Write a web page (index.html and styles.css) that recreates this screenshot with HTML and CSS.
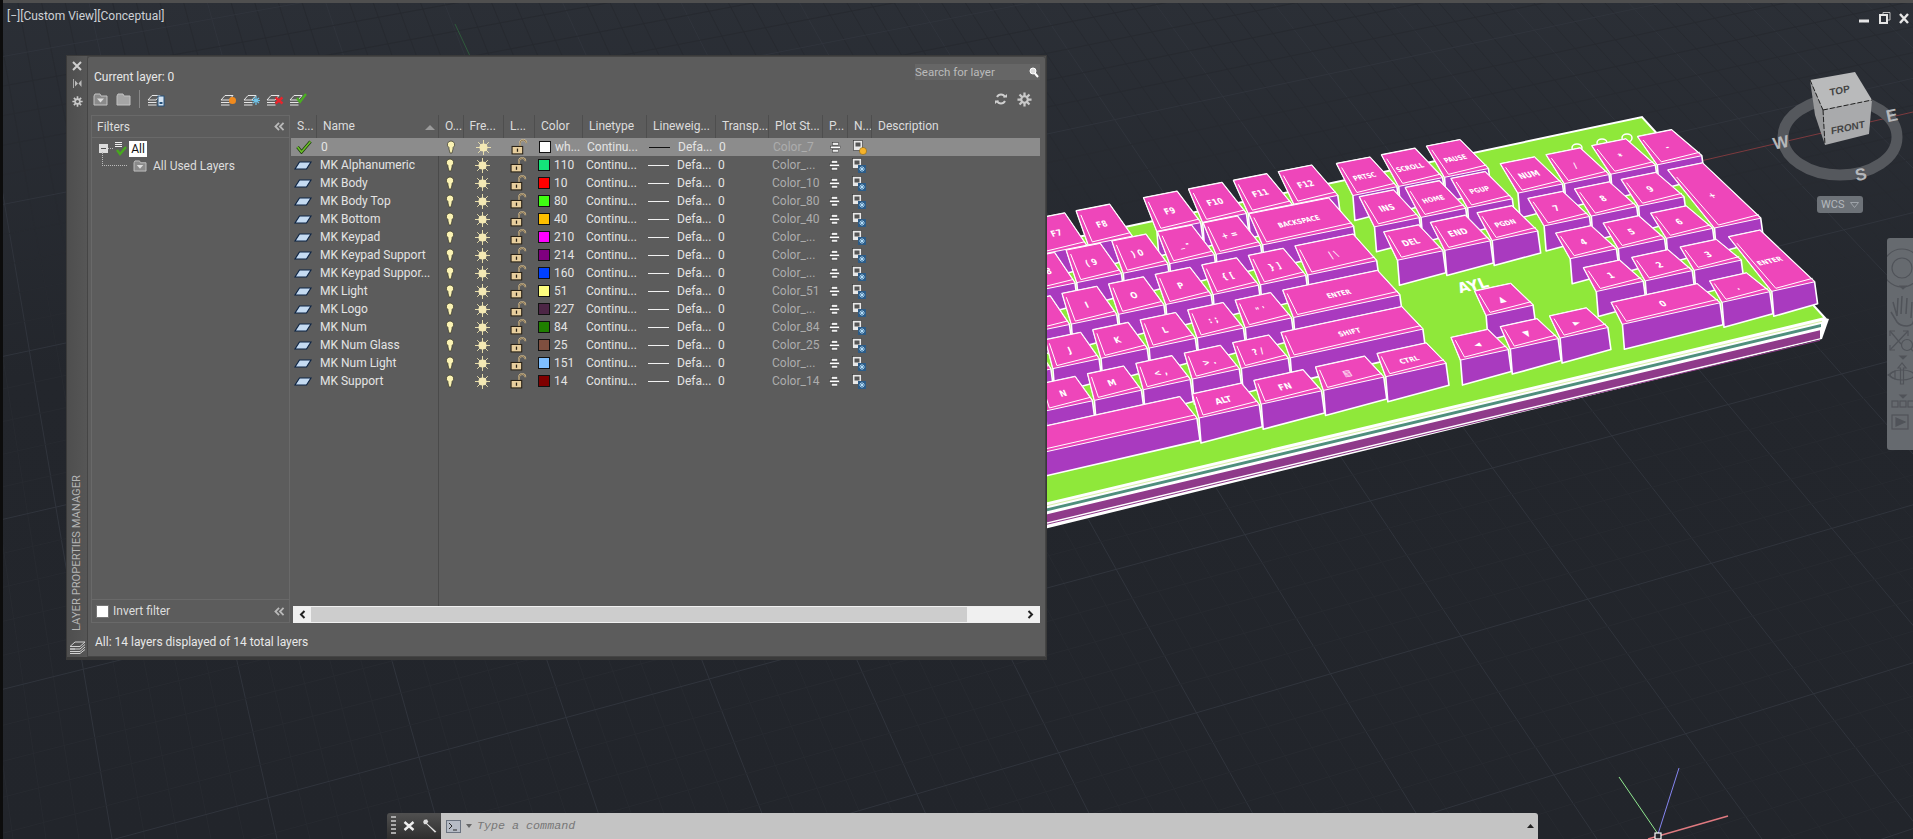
FILE: index.html
```html
<!DOCTYPE html>
<html lang="en">
<head>
<meta charset="utf-8">
<title>Layer Properties Manager</title>
<link rel="stylesheet" href="styles.css">
</head>
<body>
<svg class="defs" width="0" height="0" aria-hidden="true">
  <symbol id="layer" viewBox="0 0 18 9"><path d="M1 8 L5.500 1 H17 L12.500 8Z" fill="#c5dbf2" stroke="#0d2444" stroke-width="1.200"/></symbol>
  <symbol id="check" viewBox="0 0 16 14"><path d="M1.500 7 L5.500 12 L14.500 1.500" fill="none" stroke="#1f3d10" stroke-width="3.200"/><path d="M1.500 7 L5.500 12 L14.500 1.500" fill="none" stroke="#6cc02a" stroke-width="1.600"/></symbol>
  <symbol id="bulb" viewBox="0 0 10 14"><path d="M5 1a3.600 3.600 0 0 1 2 6.600 V9 L6 13 H4 L3 9 V7.600 A3.600 3.600 0 0 1 5 1Z" fill="#fbf3b4" stroke="#3b3a2a" stroke-width=".7"/></symbol>
  <symbol id="sun" viewBox="0 0 16 16"><g stroke="#efe4ae" stroke-width="1"><path d="M8 0v16M0 8h16M2.300 2.300l11.400 11.400M13.700 2.300 2.300 13.700"/></g><circle cx="8" cy="8" r="4.300" fill="#f3e8b4"/></symbol>
  <symbol id="lock" viewBox="0 0 16 15"><path d="M8.500 7 V4 a3 3 0 0 1 6 0" fill="none" stroke="#e9cf9b" stroke-width="1.500"/><path d="M8.500 7 V4 a3 3 0 0 1 6 0" fill="none" stroke="#33281a" stroke-width=".5"/><rect x="1" y="7" width="10" height="7" fill="#e8cf9e" stroke="#2a2216"/><rect x="5.500" y="9" width="1.200" height="3" fill="#2a2216"/></symbol>
  <symbol id="printer" viewBox="0 0 12 12"><rect x="2.500" y=".5" width="7" height="3" fill="#eee" stroke="#333" stroke-width=".6"/><rect x=".5" y="4.500" width="11" height="2.600" fill="#fff" stroke="#333" stroke-width=".6"/><rect x="2.500" y="8" width="7" height="3" fill="#eee" stroke="#333" stroke-width=".6"/></symbol>
  <symbol id="vpf" viewBox="0 0 14 15"><rect x=".5" y=".5" width="9" height="10" fill="#e8e8e8" stroke="#333" stroke-width=".6"/><rect x="2.500" y="2.500" width="5" height="4" fill="#555"/><rect x="6" y="7" width="8" height="8" fill="#2c5c88"/><path d="M10 8v6M7 11h6M8 9l4 4M12 9l-4 4" stroke="#bfe6ff" stroke-width=".8"/></symbol>
  <symbol id="vpn" viewBox="0 0 14 15"><rect x=".5" y=".5" width="9" height="10" fill="#e8e8e8" stroke="#333" stroke-width=".6"/><rect x="2.500" y="2.500" width="5" height="4" fill="#555"/><circle cx="10" cy="11" r="3.600" fill="#f6b32a" stroke="#7a5a10" stroke-width=".5"/></symbol>
  <symbol id="dchev" viewBox="0 0 12 10"><path d="M5.500 1 1.500 5l4 4M10.500 1l-4 4 4 4" fill="none" stroke="#b9b9b9" stroke-width="2"/></symbol>
  <symbol id="folder" viewBox="0 0 15 13"><path d="M1 3V12H14V3H8L7 1H2Z" fill="#8a8a8a" stroke="#c2c2c2"/><path d="M4 5.500h7L7.500 9.500Z" fill="#dcdcdc"/></symbol>
  <symbol id="state" viewBox="0 0 18 15"><path d="M1 8 L5 3.500 H13 L9 8Z" fill="#5c5c5c" stroke="#e6e6e6"/><path d="M1 10.500h8.500M1 13h8.500" stroke="#e6e6e6"/></symbol>
  <symbol id="gear" viewBox="0 0 16 16"><g stroke="#c9c9c9" stroke-width="2.400"><path d="M8 0.500v15M.5 8h15M2.700 2.700l10.600 10.600M13.300 2.700 2.700 13.300"/></g><circle cx="8" cy="8" r="4.600" fill="#c9c9c9"/><circle cx="8" cy="8" r="2.300" fill="#5c5c5c"/></symbol>
</svg>

<main class="desk">
  <svg class="scene" width="1913" height="839" viewBox="0 0 1913 839">
    <g id="grid"></g>
    <path d="M1640 175 L1913 112" stroke="#7d3a3e" stroke-width="1" fill="none"/>
    <path d="M455 24 L470 56" stroke="#2f5a3c" stroke-width="1" fill="none"/>
    <g id="kbd"></g>

    <ellipse cx="1840" cy="137" rx="57" ry="38" fill="none" stroke="#55585d" stroke-width="11"/>
    <g class="compass">
      <text x="1782" y="148" transform="rotate(-12 1782 148)">W</text>
      <text x="1893" y="121" transform="rotate(-12 1893 121)">E</text>
      <text x="1862" y="180" transform="rotate(-12 1862 180)">S</text>
    </g>
    <path d="M1810 80 L1855 72 L1872 100 L1823 110Z" fill="#b9babb"/>
    <path d="M1823 110 L1872 100 L1869 134 L1825 145Z" fill="#a9aaac"/>
    <path d="M1810 80 L1823 110 L1825 145 L1815 115Z" fill="#98999b"/>
    <path d="M1823 110 L1872 100 M1810 80 L1823 110 M1823 110 L1825 145" stroke="#222" stroke-width="1" stroke-dasharray="5 2" fill="none"/>
    <text class="cubetxt cube-top" transform="matrix(.98 -.19 .1 1 1840 94)">TOP</text>
    <text class="cubetxt cube-front" transform="matrix(.98 -.2 .05 1 1848 131)">FRONT</text>

    <path d="M1648 839 L1728 816" stroke="#e07a80" stroke-width="1.500"/>
    <path d="M1658 834 L1619 777" stroke="#8fe88f" stroke-width="1"/>
    <path d="M1658 834 L1679 768" stroke="#8585f0" stroke-width="1"/>
    <rect x="1655" y="833" width="6" height="6" fill="#24272d" stroke="#fff" stroke-width="1.200"/>
  </svg>

  <div class="topband"></div>
  <div class="leftband"></div>
  <div class="viewlabel">[&minus;][Custom View][Conceptual]</div>

  <div class="winbtns">
    <svg width="56" height="14" viewBox="0 0 56 14"><path d="M2 10h10" stroke="#e6e6e6" stroke-width="3"/><rect x="23" y="4" width="7" height="8" fill="none" stroke="#e6e6e6" stroke-width="2"/><path d="M26 3V1.500H33V9H31" fill="none" stroke="#bdbdbd" stroke-width="1"/><path d="M43 3l8 9M51 3l-8 9" stroke="#e6e6e6" stroke-width="2.400"/></svg>
  </div>

  <div class="wcs">WCS <svg width="9" height="6" viewBox="0 0 9 6"><path d="M.5.5h8L4.500 5.500Z" fill="none" stroke="#9ea3a9"/></svg></div>

  <aside class="navbar">
    <svg width="26" height="212" viewBox="0 0 26 212" fill="none" stroke="#505359" stroke-width="1.200">
      <circle cx="15" cy="30" r="19"/><circle cx="15" cy="30" r="10"/>
      <path d="M13 48h6l-3 3Z" fill="#505359"/>
      <path d="M4 74 L10 84 Q13 88 20 88 Q27 88 27 80 M10 78 L6 64 M10 78 L11 60 M14 76 L15 58 M19 76 L20 60 M24 80 L25 64" stroke-width="1.500"/>
      <path d="M3 93 L14 106 M21 93 L3 112" />
      <path d="M3 98V93H8M16 93H21V98M3 107V112H8" />
      <circle cx="20" cy="107" r="5.500"/><path d="M24 111 L30 117"/>
      <path d="M13 118h6l-3 3Z" fill="#505359"/>
      <path d="M15 125l-4 5h2.500v16h3v-16h2.500Z M1 137l7-4v8Z"/><ellipse cx="15" cy="137" rx="12" ry="5"/>
      <path d="M13 157h6l-3 3Z" fill="#505359"/>
      <rect x="5" y="163" width="6" height="6"/><rect x="13" y="163" width="6" height="6"/><rect x="21" y="163" width="6" height="6"/>
      <rect x="5" y="177" width="16" height="14"/><path d="M9 180l9 4-9 4Z" fill="#505359"/>
    </svg>
  </aside>

  <section class="cmdbar">
    <div class="cmd-tools">
      <span class="grip"></span>
      <svg width="12" height="12" viewBox="0 0 12 12"><path d="M1.500 2l9 8M10.500 2l-9 8" stroke="#eee" stroke-width="2.400"/></svg>
      <svg width="16" height="16" viewBox="0 0 16 16"><path d="M2 1.500 L5 1 L6.500 3.500 L5.500 5.500 L14.500 13.500 L13 15 L4.500 6.500 L2 6.500 L.8 4Z" fill="#ddd" stroke="#333" stroke-width=".5"/></svg>
    </div>
    <div class="cmd-input">
      <svg width="15" height="13" viewBox="0 0 15 13"><rect x=".5" y=".5" width="14" height="12" fill="#b6bcc6" stroke="#6b7380"/><path d="M3 3l3 3-3 3M7 10h4" fill="none" stroke="#2a2a2a"/></svg>
      <svg width="6" height="4" viewBox="0 0 6 4"><path d="M0 0h6L3 4Z" fill="#666"/></svg>
      <span class="cmd-text">Type a command</span>
      <svg class="cmd-up" width="7" height="4" viewBox="0 0 7 4"><path d="M0 4h7L3.500 0Z" fill="#222"/></svg>
    </div>
  </section>

  <section class="palette">
    <div class="strip">
      <div class="strip-top">
        <svg width="10" height="10" viewBox="0 0 10 10"><path d="M1 1l8 8M9 1l-8 8" stroke="#cfcfcf" stroke-width="2"/></svg>
        <svg width="9" height="9" viewBox="0 0 9 9"><path d="M.5 0v9" stroke="#aaa"/><path d="M2 1.500v6L5 4.500Z M8.500 1v7L5.500 4.500Z" fill="#bbb"/></svg>
        <svg width="11" height="11"><use href="#gear"/></svg>
      </div>
      <div class="strip-title">LAYER PROPERTIES MANAGER</div>
      <svg class="strip-icon" width="17" height="14" viewBox="0 0 17 14" fill="none" stroke="#d0d0d0"><path d="M1 6.500 L6 2 H16 L11 6.500Z M1 9l5 0 M1 9h10L16 4.500 M1 11.500h10L16 7 M1 13.500h10L16 9.500"/></svg>
    </div>
    <div class="body">
      <div class="headline">
        <span class="current">Current layer: 0</span>
        <div class="search"><span>Search for layer</span><svg width="10" height="11" viewBox="0 0 10 11"><circle cx="4" cy="4" r="3" fill="#ddd" stroke="#fff"/><path d="M6 6.500l3 3.500" stroke="#fff" stroke-width="2"/></svg></div>
      </div>
      <div class="toolbar">
        <svg class="t1" width="15" height="13"><use href="#folder"/></svg>
        <svg class="t2" width="15" height="13" viewBox="0 0 15 13"><path d="M1 3V12H14V3H8L7 1H2Z" fill="#a5a5a5" stroke="#c2c2c2"/></svg>
        <span class="tsep"></span>
        <svg class="t3" width="18" height="15" viewBox="0 0 18 15"><use href="#state" width="18" height="15"/><rect x="11" y="4" width="6" height="10" fill="#d5e4f2" stroke="#24507a"/><rect x="12.500" y="10" width="3" height="2" fill="#24507a"/></svg>
        <span class="tgap"></span>
        <svg class="ts" width="18" height="15" viewBox="0 0 18 15"><use href="#state" width="18" height="15"/><circle cx="12.500" cy="8.500" r="3.500" fill="#f08a1e"/></svg>
        <svg class="ts" width="18" height="15" viewBox="0 0 18 15"><use href="#state" width="18" height="15"/><path d="M13 4v9M9 8.500h8M10 6l6 5M16 6l-6 5" stroke="#6fc3e8" stroke-width="1.200"/></svg>
        <svg class="ts" width="18" height="15" viewBox="0 0 18 15"><use href="#state" width="18" height="15"/><path d="M9.500 5.500l7 6M16.500 5.500l-7 6" stroke="#e8242c" stroke-width="2.400"/></svg>
        <svg class="ts" width="18" height="15" viewBox="0 0 18 15"><use href="#state" width="18" height="15"/><path d="M8 6l3 4 6-8" fill="none" stroke="#49b020" stroke-width="2.200"/></svg>
        <span class="tspacer"></span>
        <svg class="tr" width="12" height="12" viewBox="0 0 12 12"><path d="M10 4A4.500 4.500 0 0 0 2 4M2 8a4.500 4.500 0 0 0 8 0" fill="none" stroke="#cfcfcf" stroke-width="2"/><path d="M8 4.500h4V1ZM4 7.500H0V11Z" fill="#cfcfcf"/></svg>
        <svg class="tr" width="15" height="15"><use href="#gear"/></svg>
      </div>
      <div class="columns">
        <div class="filters">
          <div class="fhead"><span>Filters</span><svg width="11" height="9"><use href="#dchev"/></svg></div>
          <div class="tree">
            <div class="tree-all">
              <span class="expand"></span><span class="dots-h"></span>
              <svg width="13" height="15" viewBox="0 0 13 15"><path d="M1 1.500h7M1 3.500h7M1 5.500h7" stroke="#eee" stroke-width="1.200"/><path d="M3 9l3 4 6-7" fill="none" stroke="#47a81e" stroke-width="2.400"/></svg>
              <span class="sel">All</span>
            </div>
            <div class="tree-used">
              <span class="dots-l"></span>
              <svg width="14" height="12"><use href="#folder"/></svg>
              <span>All Used Layers</span>
            </div>
          </div>
          <div class="ffoot"><span class="cb"></span><span class="inv">Invert filter</span><svg width="11" height="9"><use href="#dchev"/></svg></div>
        </div>
        <div class="table">
          <div class="thead row">
            <span>S...</span><span class="th-name">Name<i class="sort"></i></span><span>O...</span><span>Fre...</span><span>L...</span><span>Color</span><span>Linetype</span><span>Lineweig...</span><span>Transp...</span><span>Plot St...</span><span>P...</span><span>N...</span><span>Description</span>
          </div>
          <div class="tbody">
            <div class="row cur"><span class="c"><svg width="16" height="14"><use href="#check"/></svg></span><span class="n">0</span><span class="c"><svg width="10" height="14"><use href="#bulb"/></svg></span><span class="c"><svg width="15" height="15"><use href="#sun"/></svg></span><span class="c"><svg class="lk" width="17" height="16"><use href="#lock"/></svg></span><span class="col"><i class="sw s0"></i>wh...</span><span class="t">Continu...</span><span class="lw"><i class="ln dark"></i>Defa...</span><span class="z">0</span><span class="p">Color_7</span><span class="c"><svg width="11" height="11"><use href="#printer"/></svg></span><span class="c"><svg width="14" height="15"><use href="#vpn"/></svg></span><span></span></div>
            <div class="row"><span class="c"><svg width="18" height="9"><use href="#layer"/></svg></span><span class="n">MK Alphanumeric</span><span class="c"><svg width="10" height="14"><use href="#bulb"/></svg></span><span class="c"><svg width="15" height="15"><use href="#sun"/></svg></span><span class="c"><svg class="lk" width="17" height="16"><use href="#lock"/></svg></span><span class="col"><i class="sw s1"></i>110</span><span class="t">Continu...</span><span class="lw"><i class="ln"></i>Defa...</span><span class="z">0</span><span class="p">Color_...</span><span class="c"><svg width="11" height="11"><use href="#printer"/></svg></span><span class="c"><svg width="14" height="15"><use href="#vpf"/></svg></span><span></span></div>
            <div class="row"><span class="c"><svg width="18" height="9"><use href="#layer"/></svg></span><span class="n">MK Body</span><span class="c"><svg width="10" height="14"><use href="#bulb"/></svg></span><span class="c"><svg width="15" height="15"><use href="#sun"/></svg></span><span class="c"><svg class="lk" width="17" height="16"><use href="#lock"/></svg></span><span class="col"><i class="sw s2"></i>10</span><span class="t">Continu...</span><span class="lw"><i class="ln"></i>Defa...</span><span class="z">0</span><span class="p">Color_10</span><span class="c"><svg width="11" height="11"><use href="#printer"/></svg></span><span class="c"><svg width="14" height="15"><use href="#vpf"/></svg></span><span></span></div>
            <div class="row"><span class="c"><svg width="18" height="9"><use href="#layer"/></svg></span><span class="n">MK Body Top</span><span class="c"><svg width="10" height="14"><use href="#bulb"/></svg></span><span class="c"><svg width="15" height="15"><use href="#sun"/></svg></span><span class="c"><svg class="lk" width="17" height="16"><use href="#lock"/></svg></span><span class="col"><i class="sw s3"></i>80</span><span class="t">Continu...</span><span class="lw"><i class="ln"></i>Defa...</span><span class="z">0</span><span class="p">Color_80</span><span class="c"><svg width="11" height="11"><use href="#printer"/></svg></span><span class="c"><svg width="14" height="15"><use href="#vpf"/></svg></span><span></span></div>
            <div class="row"><span class="c"><svg width="18" height="9"><use href="#layer"/></svg></span><span class="n">MK Bottom</span><span class="c"><svg width="10" height="14"><use href="#bulb"/></svg></span><span class="c"><svg width="15" height="15"><use href="#sun"/></svg></span><span class="c"><svg class="lk" width="17" height="16"><use href="#lock"/></svg></span><span class="col"><i class="sw s4"></i>40</span><span class="t">Continu...</span><span class="lw"><i class="ln"></i>Defa...</span><span class="z">0</span><span class="p">Color_40</span><span class="c"><svg width="11" height="11"><use href="#printer"/></svg></span><span class="c"><svg width="14" height="15"><use href="#vpf"/></svg></span><span></span></div>
            <div class="row"><span class="c"><svg width="18" height="9"><use href="#layer"/></svg></span><span class="n">MK Keypad</span><span class="c"><svg width="10" height="14"><use href="#bulb"/></svg></span><span class="c"><svg width="15" height="15"><use href="#sun"/></svg></span><span class="c"><svg class="lk" width="17" height="16"><use href="#lock"/></svg></span><span class="col"><i class="sw s5"></i>210</span><span class="t">Continu...</span><span class="lw"><i class="ln"></i>Defa...</span><span class="z">0</span><span class="p">Color_...</span><span class="c"><svg width="11" height="11"><use href="#printer"/></svg></span><span class="c"><svg width="14" height="15"><use href="#vpf"/></svg></span><span></span></div>
            <div class="row"><span class="c"><svg width="18" height="9"><use href="#layer"/></svg></span><span class="n">MK Keypad Support</span><span class="c"><svg width="10" height="14"><use href="#bulb"/></svg></span><span class="c"><svg width="15" height="15"><use href="#sun"/></svg></span><span class="c"><svg class="lk" width="17" height="16"><use href="#lock"/></svg></span><span class="col"><i class="sw s6"></i>214</span><span class="t">Continu...</span><span class="lw"><i class="ln"></i>Defa...</span><span class="z">0</span><span class="p">Color_...</span><span class="c"><svg width="11" height="11"><use href="#printer"/></svg></span><span class="c"><svg width="14" height="15"><use href="#vpf"/></svg></span><span></span></div>
            <div class="row"><span class="c"><svg width="18" height="9"><use href="#layer"/></svg></span><span class="n">MK Keypad Suppor...</span><span class="c"><svg width="10" height="14"><use href="#bulb"/></svg></span><span class="c"><svg width="15" height="15"><use href="#sun"/></svg></span><span class="c"><svg class="lk" width="17" height="16"><use href="#lock"/></svg></span><span class="col"><i class="sw s7"></i>160</span><span class="t">Continu...</span><span class="lw"><i class="ln"></i>Defa...</span><span class="z">0</span><span class="p">Color_...</span><span class="c"><svg width="11" height="11"><use href="#printer"/></svg></span><span class="c"><svg width="14" height="15"><use href="#vpf"/></svg></span><span></span></div>
            <div class="row"><span class="c"><svg width="18" height="9"><use href="#layer"/></svg></span><span class="n">MK Light</span><span class="c"><svg width="10" height="14"><use href="#bulb"/></svg></span><span class="c"><svg width="15" height="15"><use href="#sun"/></svg></span><span class="c"><svg class="lk" width="17" height="16"><use href="#lock"/></svg></span><span class="col"><i class="sw s8"></i>51</span><span class="t">Continu...</span><span class="lw"><i class="ln"></i>Defa...</span><span class="z">0</span><span class="p">Color_51</span><span class="c"><svg width="11" height="11"><use href="#printer"/></svg></span><span class="c"><svg width="14" height="15"><use href="#vpf"/></svg></span><span></span></div>
            <div class="row"><span class="c"><svg width="18" height="9"><use href="#layer"/></svg></span><span class="n">MK Logo</span><span class="c"><svg width="10" height="14"><use href="#bulb"/></svg></span><span class="c"><svg width="15" height="15"><use href="#sun"/></svg></span><span class="c"><svg class="lk" width="17" height="16"><use href="#lock"/></svg></span><span class="col"><i class="sw s9"></i>227</span><span class="t">Continu...</span><span class="lw"><i class="ln"></i>Defa...</span><span class="z">0</span><span class="p">Color_...</span><span class="c"><svg width="11" height="11"><use href="#printer"/></svg></span><span class="c"><svg width="14" height="15"><use href="#vpf"/></svg></span><span></span></div>
            <div class="row"><span class="c"><svg width="18" height="9"><use href="#layer"/></svg></span><span class="n">MK Num</span><span class="c"><svg width="10" height="14"><use href="#bulb"/></svg></span><span class="c"><svg width="15" height="15"><use href="#sun"/></svg></span><span class="c"><svg class="lk" width="17" height="16"><use href="#lock"/></svg></span><span class="col"><i class="sw s10"></i>84</span><span class="t">Continu...</span><span class="lw"><i class="ln"></i>Defa...</span><span class="z">0</span><span class="p">Color_84</span><span class="c"><svg width="11" height="11"><use href="#printer"/></svg></span><span class="c"><svg width="14" height="15"><use href="#vpf"/></svg></span><span></span></div>
            <div class="row"><span class="c"><svg width="18" height="9"><use href="#layer"/></svg></span><span class="n">MK Num Glass</span><span class="c"><svg width="10" height="14"><use href="#bulb"/></svg></span><span class="c"><svg width="15" height="15"><use href="#sun"/></svg></span><span class="c"><svg class="lk" width="17" height="16"><use href="#lock"/></svg></span><span class="col"><i class="sw s11"></i>25</span><span class="t">Continu...</span><span class="lw"><i class="ln"></i>Defa...</span><span class="z">0</span><span class="p">Color_25</span><span class="c"><svg width="11" height="11"><use href="#printer"/></svg></span><span class="c"><svg width="14" height="15"><use href="#vpf"/></svg></span><span></span></div>
            <div class="row"><span class="c"><svg width="18" height="9"><use href="#layer"/></svg></span><span class="n">MK Num Light</span><span class="c"><svg width="10" height="14"><use href="#bulb"/></svg></span><span class="c"><svg width="15" height="15"><use href="#sun"/></svg></span><span class="c"><svg class="lk" width="17" height="16"><use href="#lock"/></svg></span><span class="col"><i class="sw s12"></i>151</span><span class="t">Continu...</span><span class="lw"><i class="ln"></i>Defa...</span><span class="z">0</span><span class="p">Color_...</span><span class="c"><svg width="11" height="11"><use href="#printer"/></svg></span><span class="c"><svg width="14" height="15"><use href="#vpf"/></svg></span><span></span></div>
            <div class="row"><span class="c"><svg width="18" height="9"><use href="#layer"/></svg></span><span class="n">MK Support</span><span class="c"><svg width="10" height="14"><use href="#bulb"/></svg></span><span class="c"><svg width="15" height="15"><use href="#sun"/></svg></span><span class="c"><svg class="lk" width="17" height="16"><use href="#lock"/></svg></span><span class="col"><i class="sw s13"></i>14</span><span class="t">Continu...</span><span class="lw"><i class="ln"></i>Defa...</span><span class="z">0</span><span class="p">Color_14</span><span class="c"><svg width="11" height="11"><use href="#printer"/></svg></span><span class="c"><svg width="14" height="15"><use href="#vpf"/></svg></span><span></span></div>
          </div>
          <div class="hscroll">
            <span class="sb-btn"><svg width="7" height="9" viewBox="0 0 7 9"><path d="M5.500 1 2 4.500l3.500 3.500" fill="none" stroke="#222" stroke-width="2"/></svg></span>
            <span class="sb-thumb"></span>
            <span class="sb-track"></span>
            <span class="sb-btn end"><svg width="7" height="9" viewBox="0 0 7 9"><path d="M1.500 1 5 4.500 1.500 8" fill="none" stroke="#222" stroke-width="2"/></svg></span>
          </div>
        </div>
      </div>
      <div class="status">All: 14 layers displayed of 14 total layers</div>
    </div>
  </section>
</main>
<script src="app.js"></script>
</body>
</html>
```
FILE: styles.css
```css
* { box-sizing: border-box; }
html, body { margin: 0; padding: 0; overflow: hidden; }
body { background: #24272d; font-family: Roboto, "Open Sans", sans-serif; font-size: 12px; color: #e4e4e4; }
.defs { position: absolute; }
.desk { position: relative; width: 1913px; height: 839px; overflow: hidden; background: linear-gradient(#2b2f36, #23262c 45%, #22252b); }
.scene { position: absolute; left: 0; top: 0; }
.compass text { font: bold 17px "Liberation Sans", sans-serif; fill: #b5b7ba; text-anchor: middle; }
.cubetxt { font: bold 10px "Liberation Sans", sans-serif; fill: #444; text-anchor: middle; }
.keylabel { font: bold 8px "DejaVu Sans", sans-serif; fill: #fff; text-anchor: middle; }
.keylabel.long { font-size: 6.500px; }
.logo { font: bold 15px "DejaVu Sans", sans-serif; fill: #fff; text-anchor: middle; }

.topband { position: absolute; left: 0; top: 0; width: 100%; height: 3px; background: #4f4f4f; }
.leftband { position: absolute; left: 0; top: 0; width: 3px; height: 100%; background: #0c0c0c; }
.viewlabel { position: absolute; left: 7px; top: 8px; line-height: 16px; color: #ced1d5; font-size: 12px; }
.winbtns { position: absolute; left: 1857px; top: 11px; line-height: 0; }

.wcs { position: absolute; left: 1817px; top: 196px; width: 46px; height: 17px; background: #6d7278; border-radius: 3px; color: #b4b8bd; font-size: 11px; line-height: 17px; padding-left: 4px; display: flex; align-items: center; gap: 6px; }
.navbar { position: absolute; left: 1887px; top: 238px; width: 26px; height: 212px; background: #666a6f; border-radius: 3px 0 0 3px; overflow: hidden; line-height: 0; }

.cmdbar { position: absolute; left: 387px; top: 813px; width: 1151px; height: 26px; display: flex; border-radius: 3px 3px 0 0; overflow: hidden; }
.cmd-tools { width: 54px; background: linear-gradient(#505050, #2e2e2e); display: flex; align-items: center; gap: 7px; padding-left: 4px; }
.grip { width: 5px; height: 20px; background: repeating-linear-gradient(#aaa 0 2px, transparent 2px 4px); }
.cmd-input { flex: 1; background: #c4c4c4; display: flex; align-items: center; padding: 0 4px 0 5px; gap: 5px; }
.cmd-text { font: italic 11.700px "Liberation Mono", monospace; color: #777; flex: 1; }

.palette { position: absolute; left: 66px; top: 55px; width: 981px; height: 605px; display: flex; background: #4c4c4c; border: 1px solid #3a3a3a; border-width: 1px 1px 3px 1px; }
.strip { width: 20px; display: flex; flex-direction: column; align-items: center; padding: 4px 0 3px; background: linear-gradient(90deg, #4e4e4e, #565656); }
.strip-top { display: flex; flex-direction: column; align-items: center; gap: 8px; line-height: 0; }
.strip-top svg:first-child { margin-top: 1px; }
.strip-title { margin-top: auto; writing-mode: vertical-rl; transform: rotate(180deg); font-size: 11.200px; line-height: 16px; color: #b5b5b5; white-space: nowrap; }
.strip-icon { margin-top: 9px; }

.body { flex: 1; display: flex; flex-direction: column; background: #5c5c5c; border: 1px solid #454545; border-radius: 3px 3px 0 0; padding: 10px 5px 0 3px; min-width: 0; }
.headline { display: flex; align-items: center; justify-content: space-between; height: 20px; padding-left: 3px; }
.current { color: #e8e8e8; }
.search { width: 125px; height: 16px; margin-top: -3px; align-self: flex-start; background: #666; color: #bbb; display: flex; align-items: center; justify-content: space-between; padding: 0 1px 0 0; font-size: 11.500px; }
.toolbar { display: flex; align-items: center; height: 22px; margin-top: 1px; padding-left: 2px; }
.t2 { margin-left: 8px; }
.tsep { width: 1px; height: 18px; background: #888; margin-left: 8px; }
.t3 { margin-left: 7px; }
.tgap { width: 55px; }
.ts { margin-right: 5px; }
.tspacer { flex: 1; }
.tr { margin-right: 10px; }
.tr:last-child { margin-right: 8px; }

.columns { display: flex; height: 508px; margin-top: 5px; }
.filters { width: 199px; border: 1px solid #696969; border-width: 1px 1px 1px 1px; display: flex; flex-direction: column; }
.fhead { height: 22px; display: flex; align-items: center; justify-content: space-between; padding: 0 4px 0 5px; border-bottom: 1px solid #696969; color: #ddd; }
.tree { flex: 1; padding-top: 2px; position: relative; }
.tree-all { display: flex; align-items: center; height: 17px; padding-left: 7px; }
.expand { width: 9px; height: 9px; background: linear-gradient(#555,#555) center/5px 1px no-repeat, #ddd; }
.dots-h { width: 5px; border-top: 1px dotted #bbb; }
.tree-all svg { margin: 0 2px 0 1px; }
.sel { background: #fff; color: #111; width: 18px; height: 16px; line-height: 16px; text-align: center; margin-top: 1px; }
.tree-used { display: flex; align-items: center; height: 17px; padding-left: 41px; position: relative; color: #ddd; }
.tree-used span:last-child { margin-left: 6px; }
.dots-l { position: absolute; left: 10px; top: -5px; width: 25px; height: 14px; border-left: 1px dotted #bbb; border-bottom: 1px dotted #bbb; }
.ffoot { height: 23px; border-top: 1px solid #696969; display: flex; align-items: center; padding: 0 4px; }
.cb { width: 13px; height: 13px; background: #fff; border: 1px solid #777; }
.inv { flex: 1; margin-left: 4px; color: #ddd; }

.table { flex: 1; display: flex; flex-direction: column; min-width: 0; }
.row { display: grid; grid-template-columns: 26px 122px 24.500px 40.500px 31px 48px 64px 69px 53px 54px 25px 24px 1fr; height: 18px; align-items: center; white-space: nowrap; }
.thead { height: 23px; color: #ddd; align-items: center; }
.thead > span { padding-left: 6px; height: 100%; line-height: 23px; border-left: 1px solid #4e4e4e; position: relative; }
.thead > span:first-child { border-left: 0; padding-left: 7px; }
.sort { position: absolute; right: 3px; top: 10px; border: 5px solid transparent; border-top: 0; border-bottom: 5px solid #9a9a9a; width: 0; height: 0; }
.tbody { flex: 1; background: linear-gradient(#4a4a4a, #4a4a4a) 148px 0 / 1px 100% no-repeat; }
.cur { background: #8c8c8c; margin-left: 1px; }
.c { display: flex; justify-content: center; align-items: center; line-height: 0; }
.n { padding-left: 4px; overflow: hidden; }
.col { display: flex; align-items: center; padding-left: 4px; gap: 4px; }
.sw { width: 12px; height: 12px; border: 1px solid #111; flex: none; }
.s0 { background: #fff; } .s1 { background: #14e37a; } .s2 { background: #f00; } .s3 { background: #3fff12; }
.s4 { background: #ffbf00; } .s5 { background: #f0f; } .s6 { background: #7f007f; } .s7 { background: #0040ff; }
.s8 { background: #ffff7f; } .s9 { background: #4c2645; } .s10 { background: #1f7f00; } .s11 { background: #7f4f3f; }
.s12 { background: #7fbfff; } .s13 { background: #7f0000; }
.t { padding-left: 4px; }
.lw { display: flex; align-items: center; padding-left: 2px; gap: 8px; }
.ln { width: 21px; height: 1px; background: #f2f2f2; flex: none; }
.ln.dark { background: #111; }
.z { padding-left: 3px; }
.p { padding-left: 4px; color: #adadad; }

.hscroll { height: 17px; margin-left: 3px; display: flex; background: #f0f0f0; border: 1px solid #f0f0f0; flex: none; }
.sb-btn { width: 17px; display: flex; align-items: center; justify-content: center; line-height: 0; background: #f0f0f0; }
.sb-thumb { width: 656px; background: #cdcdcd; }
.sb-track { flex: 1; background: #f0f0f0; }
.status { margin-top: 8px; padding-left: 4px; line-height: 22px; color: #e8e8e8; }
```
FILE: app.js
```js
// Draws the viewport: ground grid and the perspective keyboard model.
var NS = 'http://www.w3.org/2000/svg';
function el(parent, name, attrs, text) {
  var e = document.createElementNS(NS, name);
  for (var k in attrs) e.setAttribute(k, attrs[k]);
  if (text) e.textContent = text;
  parent.appendChild(e);
  return e;
}
function line(g, a, b, color) {
  el(g, 'line', { x1: a[0], y1: a[1], x2: b[0], y2: b[1], stroke: color, 'stroke-width': 1 });
}

/* ---------- grid ---------- */
var MAJOR = '#30343c', MINOR = '#272a30';
var grid = document.getElementById('grid');
var VP1 = [-389, -2123], VP2 = [9100, -1581];
for (var k = -65; k <= 45; k++) {
  var xb = 1597 + 33 * k;
  var f = (839 - VP1[1]);
  var dx = (xb - VP1[0]) / f;
  var y0 = 0, y1 = 839;
  if (k % 5 !== 0) line(grid, [VP1[0] + dx * (y0 - VP1[1]), y0], [VP1[0] + dx * (y1 - VP1[1]), y1], MINOR);
}
for (var k = -65; k <= 45; k += 1) {
  if (k % 5 !== 0) continue;
  var xb2 = 1597 + 33 * k, dx2 = (xb2 - VP1[0]) / (839 - VP1[1]);
  line(grid, [VP1[0] + dx2 * (0 - VP1[1]), 0], [VP1[0] + dx2 * (839 - VP1[1]), 839], MAJOR);
}
var majors = [57, 205, 357, 520, 690, 870, 1060, 1260, 1470, 1690, 1920];
for (var i = 0; i < majors.length - 1; i++) {
  for (var j = 0; j < 5; j++) {
    var y = majors[i] + (majors[i + 1] - majors[i]) * j / 5;
    var s = (VP2[1] - y) / VP2[0];
    line(grid, [0, y], [1913, y + s * 1913], j === 0 ? MAJOR : MINOR);
  }
}

/* ---------- keyboard projection ---------- */
var A = [1143, 252], B = [1621, 156], C = [1223, 400], D = [1737, 287];
function lerp(a, b, t) { return [a[0] + (b[0] - a[0]) * t, a[1] + (b[1] - a[1]) * t]; }
function P(x, y) {
  var s = (x - 10.625) / 10.375, t = (y - 1.5) / 4;
  return lerp(lerp(A, B, s), lerp(C, D, s), t);
}
function pts(list) { return list.map(function (p) { return p[0].toFixed(1) + ',' + p[1].toFixed(1); }).join(' '); }
function add(p, dx, dy) { return [p[0] + dx, p[1] + dy]; }

var kbd = document.getElementById('kbd');
var PINK = '#ee46ba', PURPLE = '#a93abf', WHITE = '#ffffff', GREEN = '#8fe83a';

/* board */
function front(x) { return 503 - 0.238 * (x - 1048); }
function band(top, bottom, tipInset) {
  return [[1040, front(1040) + top], [1825 - tipInset, front(1825 - tipInset) + top], [1825 - tipInset, front(1825 - tipInset) + bottom], [1040, front(1040) + bottom]];
}
el(kbd, 'polygon', { points: pts([[1040, front(1040)], [1825, 318], [1829, 319], [1822, 339], [1040, front(1040) + 25]]), fill: WHITE });
el(kbd, 'polygon', { points: pts(band(11, 19, 5)), fill: '#8f3a8a' });
el(kbd, 'polygon', { points: pts(band(5, 8, 4)), fill: '#4f8f7d' });
el(kbd, 'polyline', { points: pts([[1040, front(1040) + 21], [1820, front(1820) + 21]]), stroke: '#8f3a8a', 'stroke-width': 1, fill: 'none' });
el(kbd, 'polygon', { points: pts([[1040, 245], [1642, 117], [1825, 318], [1040, front(1040)]]), fill: GREEN, stroke: WHITE, 'stroke-width': 2 });
line(kbd, [1040, front(1040) + 2.5], [1822, front(1822) + 2.5], '#d8f0a8');

/* indicator lamps and logo on the board */
[[1577, 148], [1602, 143], [1627, 138]].forEach(function (c) {
  el(kbd, 'ellipse', { cx: c[0], cy: c[1], rx: 5, ry: 4, fill: 'none', stroke: WHITE, 'stroke-width': 1.5 });
});
el(kbd, 'text', { 'class': 'logo', transform: 'matrix(.97 -.22 .42 .9 1475 290)' }, 'AYL');

/* keys: [x0, x1, yTop, yBottom, label] */
var keys = [];
function K(x0, x1, y0, y1, label) { keys.push({ x0: x0, x1: x1, y0: y0, y1: y1, label: label }); }
function row(y, start, items) {
  var x = start;
  items.forEach(function (it) {
    var w = it[0];
    if (it[1] !== null) K(x, x + w, y, y, it[1]);
    x += w;
  });
}
function ones(labels) { return labels.map(function (l) { return [1, l]; }); }

row(0.62, 7.6, [[1, 'F6'], [1, 'F7'], [1, 'F8'], [0.5, null]].concat(ones(['F9', 'F10', 'F11', 'F12'])));
row(1.5, 6, ones(['^ 6', '& 7', '* 8', '( 9', ') 0', '_ -', '+ =']).concat([[2, 'BACKSPACE']]));
row(2.5, 5.5, ones(['T', 'Y', 'U', 'I', 'O', 'P', '{ [', '} ]']).concat([[1.5, '| \\']]));
row(3.5, 5.75, ones(['G', 'H', 'J', 'K', 'L', ': ;', '" \'']).concat([[2.25, 'ENTER']]));
row(4.5, 5.25, ones(['V', 'B', 'N', 'M', '< ,', '> .', '? /']).concat([[2.75, 'SHIFT']]));
row(5.5, 3.75, [[6.25, ''], [1.25, 'ALT'], [1.25, 'FN'], [1.25, '▤'], [1.25, 'CTRL']]);
row(0.7, 15.35, ones(['PRTSC', 'SCROLL', 'PAUSE']));
row(1.62, 15.35, ones(['INS', 'HOME', 'PGUP']));
row(2.6, 15.35, ones(['DEL', 'END', 'PGDN']));
K(16.25, 17.25, 4.5, 4.5, '▲');
row(5.5, 15.25, ones(['◄', '▼', '►']));
row(1.5, 18.5, ones(['NUM', '/', '*', '-']));
row(2.5, 18.5, ones(['7', '8', '9']));
K(21.5, 22.5, 2.5, 3.5, '+');
row(3.5, 18.5, ones(['4', '5', '6']));
row(4.5, 18.5, ones(['1', '2', '3']));
K(21.5, 22.4, 4.5, 5.5, 'ENTER');
K(18.5, 20.5, 5.5, 5.5, '0');
K(20.5, 21.5, 5.5, 5.5, '.');

keys.sort(function (a, b) { return (a.y1 - b.y1) || (a.x0 - b.x0); });

function depth(y) { return 0.46 - 0.028 * y; }

keys.forEach(function (k) {
  var dt = depth(k.y0), db = depth(k.y1);
  var TL = P(k.x0 + 0.13, k.y0 - dt), TR = P(k.x1 - 0.13, k.y0 - dt);
  var BR = P(k.x1 - 0.02, k.y1 + db), BL = P(k.x0 + 0.02, k.y1 + db);
  var BRb = add(BR, 3, 22), BLb = add(BL, 2, 25);
  el(kbd, 'polygon', { points: pts([TL, TR, BR, BRb, BLb, BL]), fill: PURPLE, stroke: WHITE, 'stroke-width': 1.6, 'stroke-linejoin': 'round' });
  el(kbd, 'polygon', { points: pts([TL, TR, BR, BL]), fill: PINK, stroke: WHITE, 'stroke-width': 1, 'stroke-linejoin': 'round' });
  var a = lerp(TL, BL, 0.12), b = add(BL, 4, -3), c = add(BR, -2, -3.5);
  el(kbd, 'polyline', { points: pts([add(a, 3, 0), b, c]), fill: 'none', stroke: WHITE, 'stroke-width': 1 });
  if (k.label) {
    var cx = (k.x0 + k.x1) / 2, cy = (k.y0 + k.y1) / 2;
    var o = P(cx, cy + 0.08), ux = P(cx + 1, cy), vx = P(cx, cy + 1), o0 = P(cx, cy);
    var m = [(ux[0] - o0[0]) / 48, (ux[1] - o0[1]) / 48, (vx[0] - o0[0]) / 37, (vx[1] - o0[1]) / 37, o[0], o[1]];
    el(kbd, 'text', { 'class': k.label.length > 3 ? 'keylabel long' : 'keylabel', transform: 'matrix(' + m.map(function (n) { return n.toFixed(3); }).join(' ') + ')' }, k.label);
  }
});
```
